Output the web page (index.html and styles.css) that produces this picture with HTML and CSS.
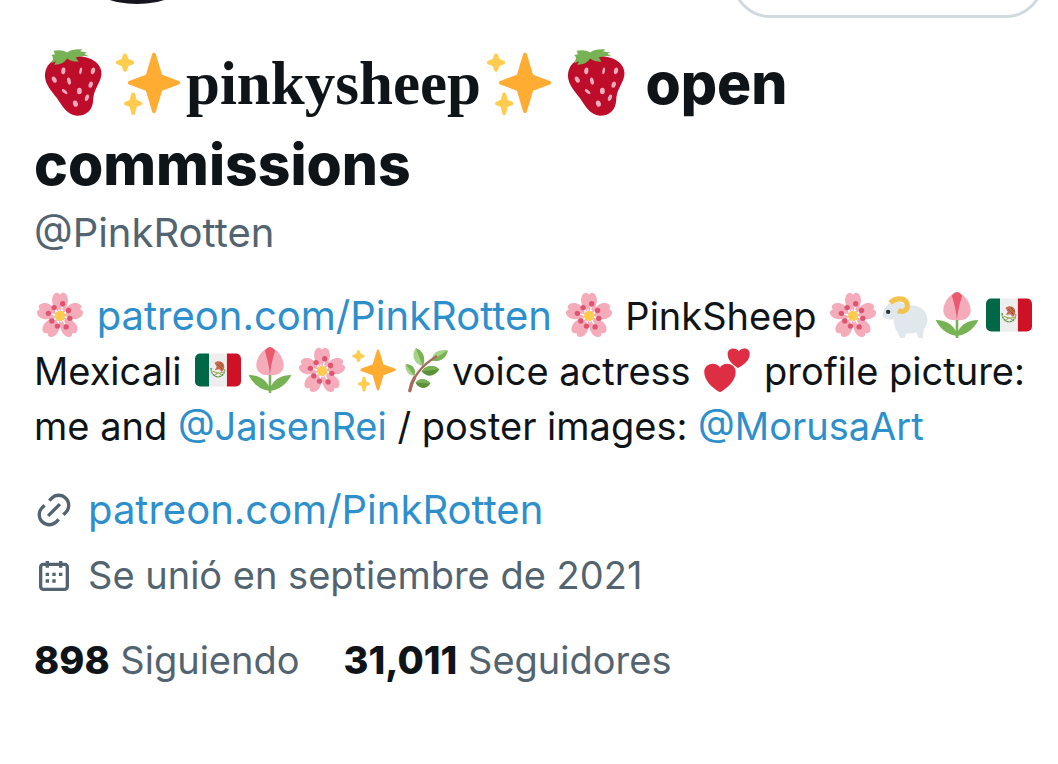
FILE: index.html
```html
<!DOCTYPE html>
<html lang="es">
<head>
  <meta charset="utf-8" />
  <meta name="viewport" content="width=device-width, initial-scale=1" />
  <title>pinkysheep (@PinkRotten)</title>
  <link rel="stylesheet" href="styles.css">
</head>
<body>
  <!-- emoji shapes, reused below -->
  <svg class="sprite" aria-hidden="true">
    <symbol id="strawberry" viewBox="0 0 36 36">
      <path fill="#BE0C2B" d="M3.7 14.5C3.5 10 6 7 9 5.5C14 3.2 24 2.8 29 5.8C33 8.2 34.6 12 33 16C31.5 20 29.5 22 29.2 27C29 32 26 35.4 20.5 35.4C15.5 35 13 30.5 10 26C7 22 4 19 3.7 14.5Z"/>
      <path fill="#77B255" d="M7 7.5Q8.8 4.5 7 3.2L9 2.8L8.2 .9Q13 .2 15.5 1.8Q18-.3 23.7.2L22.2 1.2L26 1.8L24.6 2.6L26.8 3.9Q23.5 3.4 20 4.5L21.5 6.8Q17.5 6.7 15.5 5Q13 8.5 8.6 8.3L9.5 6.5Z"/>
      <g fill="#F4ABBA">
        <ellipse cx="13.4" cy="11.6" rx="1.1" ry="1.8" transform="rotate(8 13.4 11.6)"/>
        <ellipse cx="22.6" cy="11.6" rx=".7" ry="1.8" transform="rotate(8 22.6 11.6)"/>
        <ellipse cx="29.1" cy="11.6" rx="1.1" ry="1.8" transform="rotate(12 29.1 11.6)"/>
        <ellipse cx="8.6" cy="16.2" rx="1.1" ry="1.8" transform="rotate(-30 8.6 16.2)"/>
        <ellipse cx="16.4" cy="17" rx="1" ry="1.9" transform="rotate(-12 16.4 17)"/>
        <ellipse cx="27.9" cy="18.9" rx="1.1" ry="1.7" transform="rotate(18 27.9 18.9)"/>
        <ellipse cx="14.1" cy="22.6" rx=".8" ry="1.8" transform="rotate(-50 14.1 22.6)"/>
        <ellipse cx="21.9" cy="22.2" rx="1.3" ry="1.7"/>
        <ellipse cx="25.9" cy="25.8" rx="1" ry="1.8" transform="rotate(18 25.9 25.8)"/>
        <ellipse cx="19.8" cy="28.9" rx="1.3" ry="1.7" transform="rotate(-15 19.8 28.9)"/>
      </g>
    </symbol>
    <symbol id="sparkles" viewBox="0 0 36 36">
      <path fill="#FFAC33" d="M34.347 16.893l-8.899-3.294-3.323-10.891c-.128-.42-.517-.708-.956-.708-.439 0-.828.288-.956.708l-3.322 10.891-8.9 3.294c-.393.146-.653.519-.653.938 0 .418.26.793.653.938l8.895 3.293 3.324 11.223c.126.424.516.715.959.715.442 0 .833-.291.959-.716l3.324-11.223 8.896-3.293c.391-.144.652-.518.652-.937 0-.418-.261-.792-.653-.938z"/>
      <path fill="#FFCC4D" d="M14.347 27.894l-2.314-.856-.9-3.3c-.118-.436-.513-.738-.964-.738-.451 0-.846.302-.965.737l-.9 3.3-2.313.856c-.393.146-.653.52-.653.938 0 .418.26.793.653.938l2.301.853.907 3.622c.112.444.511.756.97.756.459 0 .858-.312.97-.757l.907-3.622 2.301-.853c.393-.144.653-.519.653-.937 0-.418-.26-.793-.653-.937zM10.009 6.231l-2.364-.875-.876-2.365c-.145-.393-.519-.653-.938-.653-.418 0-.792.26-.938.653l-.875 2.365-2.365.875c-.393.146-.653.52-.653.938 0 .418.26.793.653.938l2.365.875.875 2.365c.146.393.52.653.938.653.418 0 .792-.26.938-.653l.875-2.365 2.365-.875c.393-.146.653-.52.653-.938 0-.418-.26-.792-.653-.938z"/>
    </symbol>
    <symbol id="petal" viewBox="0 0 36 36">
      <path d="M18 19C15 16 11.6 10.5 11.8 6C12 2.600 13.800.500 16 .6C17 .7 17.400 2 18 2C18.600 2 19 .7 20 .6C22.200.500 24 2.600 24.200 6C24.400 10.500 21 16 18 19Z"/>
    </symbol>
    <symbol id="blossom" viewBox="0 0 36 36">
      <g fill="#F4ABBA">
        <use href="#petal" width="36" height="36"/>
        <use href="#petal" width="36" height="36" transform="rotate(72 18 18.7)"/>
        <use href="#petal" width="36" height="36" transform="rotate(144 18 18.7)"/>
        <use href="#petal" width="36" height="36" transform="rotate(216 18 18.7)"/>
        <use href="#petal" width="36" height="36" transform="rotate(288 18 18.7)"/>
      </g>
      <path stroke="#FFF" stroke-width="1" d="M18 18.7l1.8-7M18 18.7l6-4M18 18.7l6 1.5M18 18.7l4 6.500M18 18.7l-1.6 6.500M18 18.7l-5.6 3.500M18 18.7l-7-1.500M18 18.7l-4-5.500"/>
      <g fill="#DD5570">
        <circle cx="20.1" cy="9.2" r="2.1"/><circle cx="24.7" cy="14.5" r="2.1"/><circle cx="25.7" cy="20.6" r="2.1"/><circle cx="22.8" cy="27.3" r="2.1"/>
        <circle cx="16" cy="26.7" r="2.1"/><circle cx="11.6" cy="22.6" r="2.1"/><circle cx="8.9" cy="16.7" r="2.1"/><circle cx="13.4" cy="12.2" r="2.1"/>
      </g>
      <circle cx="18" cy="18.7" r="4.6" fill="none" stroke="#FFF" stroke-width=".8" stroke-dasharray="1.4 1.4"/>
      <circle cx="18" cy="18.7" r="3.9" fill="#FFCC4D"/>
    </symbol>
    <symbol id="ram" viewBox="0 0 36 36">
      <path fill="#E1E8ED" d="M.4 18.5C1 14 4 8 10 7.5C15 7 19 11 21 10.5C28 9.5 35.8 14 35.6 22C35.4 26 33 28 32.6 30L32 36H28.5L27 31.5Q24 33 19 32.4L17.5 36H14L12 31C9.5 28.5 9.6 24.5 9 20.5Q7 22.5 4 21Q.5 20.5.4 18.5Z"/>
      <circle cx="4.8" cy="15.5" r="1.7" fill="#292F33"/>
      <path fill="none" stroke="#F4C34D" stroke-width="4" d="M6.5 8.5C9.5 4.8 17 4 19.3 8.2C21.5 13 17.5 16.6 12.5 14.5"/>
    </symbol>
    <symbol id="tulip" viewBox="0 0 36 36">
      <path fill="#77B255" d="M17 20h2v10.5C21.5 25.5 27 22 34.7 22C32 28 26 33.5 19 34.2V36h-2v-1.8C10 33.5 4 28 1.3 22C9 22 14.5 25.5 17 30.5Z"/>
      <path fill="#EA596E" d="M13.500 3C15.500.8 17 0 18 0S20.500.8 22.500 3L21 15L18 22L15 15Z"/>
      <path fill="#F4ABBA" d="M13.700 2.200C15.500 8 17.300 14 18 22C12 23 7.300 19.500 7.300 14.500C7.300 10 10 5 13.700 2.200ZM22.300 2.200C20.500 8 18.700 14 18 22C24 23 28.700 19.500 28.700 14.500C28.700 10 26 5 22.300 2.200Z"/>
    </symbol>
    <symbol id="flag" viewBox="0 0 36 36">
      <path fill="#006847" d="M4 5a4 4 0 0 0-4 4v18a4 4 0 0 0 4 4h7V5z"/>
      <path fill="#EEE" d="M11 5h14v26H11z"/>
      <path fill="#CE1126" d="M32 5h-7v26h7a4 4 0 0 0 4-4V9a4 4 0 0 0-4-4z"/>
      <path fill="none" stroke="#5C9542" stroke-width="1.1" stroke-dasharray="2 .5" d="M12.6 16.5C12.5 25.5 23 25.5 23.3 17.5"/>
      <path fill="none" stroke="#9CA55C" stroke-width=".8" d="M14 19l4 1.5 4-.5M15.5 22l2.5-2 3 2"/>
      <path fill="#C76F4E" d="M15.3 12.5C17 10.7 21 10.5 22.5 13.5C23.5 16 22.5 18.5 21 19.5L19 17.5L15.5 18L17 15.5Z"/>
      <path stroke="#8A4633" stroke-width=".7" d="M17.5 13.5l4 4M19.5 12l2.5 3.5"/>
    </symbol>
    <symbol id="herb" viewBox="0 0 36 36">
      <path fill="#A6D388" d="M15.5 15C8 13.5 6.5 5 10 1C15 2.5 18.5 8 15.5 15ZM22.5 10.5C23 4 28 1.5 35 2.5C34 9 28.5 12 22.5 10.5ZM9 22.5C4.5 22.5 1.5 18.5 2 13.5C7.5 13.5 10.5 17 9 22.5Z"/>
      <path fill="#77B255" d="M10 1C15 2.5 18.5 8 15.5 15ZM35 2.5C34 9 28.5 12 22.5 10.5ZM2 13.5C7.5 13.5 10.5 17 9 22.5Z"/>
      <path fill="#5C913B" d="M14.5 19C18 14 24.5 13.5 28.5 17.5C25 23 19 24.5 14.5 19ZM9.8 28C13 24 18 24.5 21.5 28.5C18 33.5 12.5 33 9.8 28Z"/>
      <path fill="#77B255" d="M14.5 19C18 14 24.5 13.5 28.5 17.5ZM9.8 28C13 24 18 24.5 21.5 28.5Z"/>
      <path fill="none" stroke="#A66A5D" stroke-width="1.8" stroke-linecap="round" d="M26 7.5C18 12.5 8 21 5.5 34"/>
      <path fill="none" stroke="#A66A5D" stroke-width="2.6" stroke-linecap="round" d="M9 24Q6.3 28.5 5.3 34.2"/>
    </symbol>
    <symbol id="hearts" viewBox="0 0 36 36">
      <path fill="#DD2E44" d="M12.5 35.5C6 31.5 .2 26 .2 19.5C.2 12.500 9.500 11 12.5 16C15.500 11 24.8 12.500 24.8 19.5C24.8 26 19 31.5 12.5 35.5Z"/>
      <path fill="#DD2E44" d="M26.5 16.500C22 13.500 18.300 10 18.5 5.500C18.700.500 25 0 27.2 3.300C29.700 0 35.800.500 35.8 5.500C35.800 10 31.5 14 26.5 16.500Z"/>
    </symbol>
  </svg>

  <header class="top">
    <div class="avatar"></div>
    <button class="action" type="button" aria-label="Editar perfil"></button>
  </header>

  <main class="profile">
    <h1 class="name"><svg class="emoji" role="img" aria-label="fresa"><use href="#strawberry"/></svg><svg class="emoji" role="img" aria-label="destellos"><use href="#sparkles"/></svg><span class="serif">pinkysheep</span><svg class="emoji" role="img" aria-label="destellos"><use href="#sparkles"/></svg><svg class="emoji" role="img" aria-label="fresa"><use href="#strawberry"/></svg> open commissions</h1>
    <p class="handle">@PinkRotten</p>

    <p class="bio">
      <svg class="emoji" role="img" aria-label="flor"><use href="#blossom"/></svg> <a class="url" href="#">patreon.com/PinkRotten</a> <svg class="emoji" role="img" aria-label="flor"><use href="#blossom"/></svg> PinkSheep <svg class="emoji" role="img" aria-label="flor"><use href="#blossom"/></svg><svg class="emoji" role="img" aria-label="carnero"><use href="#ram"/></svg><svg class="emoji" role="img" aria-label="tulipán"><use href="#tulip"/></svg><svg class="emoji" role="img" aria-label="México"><use href="#flag"/></svg><br>
      Mexicali <svg class="emoji" role="img" aria-label="México"><use href="#flag"/></svg><svg class="emoji" role="img" aria-label="tulipán"><use href="#tulip"/></svg><svg class="emoji" role="img" aria-label="flor"><use href="#blossom"/></svg><svg class="emoji" role="img" aria-label="destellos"><use href="#sparkles"/></svg><svg class="emoji" role="img" aria-label="hierba"><use href="#herb"/></svg>voice actress <svg class="emoji" role="img" aria-label="corazones"><use href="#hearts"/></svg> profile picture:<br>
      me and <a href="#">@JaisenRei</a> / poster images: <a href="#">@MorusaArt</a>
    </p>

    <ul class="details">
      <li>
        <svg class="icon" viewBox="0 0 24 24" aria-hidden="true"><path d="M18.36 5.64c-1.95-1.96-5.11-1.96-7.07 0L9.88 7.05 8.46 5.64l1.42-1.42c2.73-2.73 7.16-2.73 9.9 0 2.73 2.74 2.73 7.17 0 9.9l-1.42 1.42-1.41-1.42 1.41-1.41c1.96-1.96 1.96-5.12 0-7.07zm-2.12 3.53l-7.07 7.07-1.41-1.41 7.07-7.07 1.41 1.41zm-12.02.71l1.42-1.42 1.41 1.42-1.41 1.41c-1.96 1.96-1.96 5.12 0 7.07 1.95 1.96 5.11 1.96 7.07 0l1.41-1.41 1.42 1.41-1.42 1.42c-2.73 2.73-7.16 2.73-9.9 0-2.73-2.74-2.73-7.17 0-9.9z"/></svg>
        <a class="url" href="#">patreon.com/PinkRotten</a>
      </li>
      <li>
        <svg class="icon" viewBox="0 0 24 24" aria-hidden="true"><path d="M7 4V3h2v1h6V3h2v1h1.5C19.89 4 21 5.12 21 6.5v12c0 1.38-1.11 2.5-2.5 2.5h-13C4.12 21 3 19.88 3 18.5v-12C3 5.12 4.12 4 5.5 4H7zm0 2H5.5c-.27 0-.5.22-.5.5v12c0 .28.23.5.5.5h13c.28 0 .5-.22.5-.5v-12c0-.28-.22-.5-.5-.5H17v1h-2V6H9v1H7V6zm0 6h2v-2H7v2zm0 4h2v-2H7v2zm4-4h2v-2h-2v2zm0 4h2v-2h-2v2zm4-4h2v-2h-2v2z"/></svg>
        <span>Se unió en septiembre de 2021</span>
      </li>
    </ul>

    <div class="stats">
      <a href="#"><b>898</b> Siguiendo</a>
      <a href="#"><b>31,011</b> Seguidores</a>
    </div>
  </main>
</body>
</html>
```
FILE: styles.css
```css
html, body {
  margin: 0;
  padding: 0;
}

body {
  background: #fff;
  color: #0f1419;
  font-family: Inter, "Liberation Sans", sans-serif;
  font-size: 38px;
  line-height: 55px;
}

a {
  color: #2d8fcb;
  text-decoration: none;
}

.sprite {
  display: none;
}

/* only the lower edge of the avatar and the button shows */
.top {
  display: flex;
  justify-content: space-between;
  align-items: flex-end;
  height: 18px;
  padding: 0 14px 0 42px;
  overflow: hidden;
}

.avatar {
  flex: none;
  width: 190px;
  height: 190px;
  margin-bottom: 14px;
  border-radius: 50%;
  background: #15151f;
}

.action {
  flex: none;
  box-sizing: border-box;
  width: 312px;
  height: 76px;
  border: 3px solid #cfd9de;
  border-radius: 38px;
  background: #fff;
}

.profile {
  padding: 25px 14px 0 34px;
}

.name {
  margin: 0;
  font-size: 57px;
  font-weight: 800;
  line-height: 81px;
}

.serif {
  font-family: "Liberation Serif", serif;
  font-size: 61px;
  line-height: 1;
}

.emoji {
  width: 46px;
  height: 46px;
  margin: 0 3px;
  vertical-align: -8px;
}

.name .emoji {
  width: 68px;
  height: 68px;
  margin: 0 4px;
  vertical-align: -13px;
}

.handle {
  margin: 0;
  color: #536471;
}

.handle, .url {
  font-size: 40px;
}

.bio {
  margin: 28px 0;
}

.details {
  margin: 0;
  padding: 0;
  list-style: none;
  color: #536471;
}

.details li {
  display: flex;
  align-items: center;
  gap: 14px;
  margin-bottom: 11px;
}

.icon {
  flex: none;
  width: 40px;
  height: 40px;
  fill: #536471;
}

.stats {
  display: flex;
  gap: 44px;
  margin-top: 30px;
}

.stats a {
  color: #536471;
}

.stats b {
  color: #0f1419;
  font-weight: 800;
}
```
